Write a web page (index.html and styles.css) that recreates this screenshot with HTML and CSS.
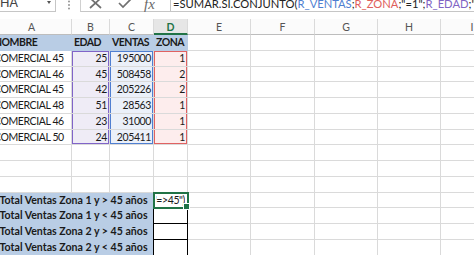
FILE: index.html
```html
<!DOCTYPE html>
<html>
<head lang="es">
    <meta charset="UTF-8">
    <title>SUMAR.SI.CONJUNTO</title>
    <link rel="stylesheet" href="styles.css">
</head>
<body>
<div id="fbar">
    <div class="namebox">
        <span class="nb-text">HA</span>
        <span class="nb-arrow"></span>
    </div>
    <div class="grip">
        <svg width="4" height="10" viewBox="0 0 4 10"><circle cx="2" cy="1.5" r="0.9"/><circle cx="2" cy="5" r="0.9"/><circle cx="2" cy="8.5" r="0.9"/></svg>
    </div>
    <div class="fbtns">
        <svg class="ico-x" width="13" height="11" viewBox="0 0 13 11"><path d="M1 0 L12 10 M12 0 L1 10"/></svg>
        <svg class="ico-ok" width="14" height="10" viewBox="0 0 14 10"><path d="M1 4 L5 8 L13 0"/></svg>
        <span class="fx">fx</span>
    </div>
    <div class="formula">=SUMAR.SI.CONJUNTO(<span class="r-v">R_VENTAS</span>;<span class="r-z">R_ZONA</span>;"=1";<span class="r-e">R_EDAD</span>;"=&gt;45")</div>
</div>

<div id="sheet">
    <!-- cabeceras de columna -->
    <div class="ch">A</div><div class="ch">B</div><div class="ch">C</div><div class="ch sel">D</div><div class="ch">E</div><div class="ch">F</div><div class="ch">G</div><div class="ch">H</div><div class="ch">I</div>

    <!-- fila 1: encabezados de la tabla -->
    <div class="c th">NOMBRE</div><div class="c th">EDAD</div><div class="c th">VENTAS</div><div class="c th">ZONA</div>
    <div class="c"></div><div class="c"></div><div class="c"></div><div class="c"></div><div class="c"></div>

    <!-- datos -->
    <div class="c">COMERCIAL 45</div><div class="c n rb top">25</div><div class="c n rc top">195000</div><div class="c n rd top">1</div>
    <div class="c"></div><div class="c"></div><div class="c"></div><div class="c"></div><div class="c"></div>

    <div class="c">COMERCIAL 46</div><div class="c n rb">45</div><div class="c n rc">508458</div><div class="c n rd">2</div>
    <div class="c"></div><div class="c"></div><div class="c"></div><div class="c"></div><div class="c"></div>

    <div class="c">COMERCIAL 45</div><div class="c n rb">42</div><div class="c n rc">205226</div><div class="c n rd">2</div>
    <div class="c"></div><div class="c"></div><div class="c"></div><div class="c"></div><div class="c"></div>

    <div class="c">COMERCIAL 48</div><div class="c n rb">51</div><div class="c n rc">28563</div><div class="c n rd">1</div>
    <div class="c"></div><div class="c"></div><div class="c"></div><div class="c"></div><div class="c"></div>

    <div class="c">COMERCIAL 46</div><div class="c n rb">23</div><div class="c n rc">31000</div><div class="c n rd">1</div>
    <div class="c"></div><div class="c"></div><div class="c"></div><div class="c"></div><div class="c"></div>

    <div class="c">COMERCIAL 50</div><div class="c n rb bot">24</div><div class="c n rc bot">205411</div><div class="c n rd bot">1</div>
    <div class="c"></div><div class="c"></div><div class="c"></div><div class="c"></div><div class="c"></div>

    <!-- filas vacias -->
    <div class="c"></div><div class="c"></div><div class="c"></div><div class="c"></div><div class="c"></div><div class="c"></div><div class="c"></div><div class="c"></div><div class="c"></div>
    <div class="c"></div><div class="c"></div><div class="c"></div><div class="c"></div><div class="c"></div><div class="c"></div><div class="c"></div><div class="c"></div><div class="c"></div>
    <div class="c"></div><div class="c"></div><div class="c"></div><div class="c"></div><div class="c"></div><div class="c"></div><div class="c"></div><div class="c"></div><div class="c"></div>

    <!-- totales -->
    <div class="c tl">Total Ventas Zona 1 y &gt; 45 años</div><div class="c box active"><span>"=&gt;45")</span></div>
    <div class="c"></div><div class="c"></div><div class="c"></div><div class="c"></div><div class="c"></div>

    <div class="c tl">Total Ventas Zona 1 y &lt; 45 años</div><div class="c box"></div>
    <div class="c"></div><div class="c"></div><div class="c"></div><div class="c"></div><div class="c"></div>

    <div class="c tl">Total Ventas Zona 2 y &gt; 45 años</div><div class="c box"></div>
    <div class="c"></div><div class="c"></div><div class="c"></div><div class="c"></div><div class="c"></div>

    <div class="c tl">Total Ventas Zona 2 y &lt; 45 años</div><div class="c box"></div>
    <div class="c"></div><div class="c"></div><div class="c"></div><div class="c"></div><div class="c"></div>
</div>
</body>
</html>
```

FILE: styles.css
```css
* {
    margin: 0;
    padding: 0;
    box-sizing: border-box;
}

body {
    width: 474px;
    height: 255px;
    overflow: hidden;
    background: #fff;
    color: #1a1a1a;
    font-family: Lato, "Liberation Sans", sans-serif;
    font-size: 10.5px;
    letter-spacing: -0.4px;
}

/* barra de formulas */
#fbar {
    display: flex;
    height: 17px;
    margin-top: -5px;
    line-height: 16px;
    letter-spacing: 0;
}

.namebox {
    width: 56px;
    display: flex;
    justify-content: space-between;
    align-items: center;
    padding-right: 4px;
    font-size: 12.5px;
    border-right: 1px solid #c6c6c6;
    border-bottom: 1px solid #c6c6c6;
    color: #444;
}

.nb-arrow {
    width: 0;
    height: 0;
    border-left: 2.5px solid transparent;
    border-right: 2.5px solid transparent;
    border-top: 3px solid #555;
    margin-top: -1px;
}

.grip {
    width: 24px;
    display: flex;
    align-items: center;
    padding-left: 11px;
    padding-top: 3px;
    fill: #8a8a8a;
}

.fbtns {
    width: 90px;
    display: flex;
    align-items: center;
    padding-left: 8px;
    padding-top: 1px;
    border-left: 1px solid #d0d0d0;
    border-bottom: 1px solid #c6c6c6;
}

.fbtns svg {
    fill: none;
    stroke: #707070;
    stroke-width: 1.7;
}

.ico-ok {
    margin-left: 16px;
}

.fx {
    margin-left: 12px;
    font-family: "Liberation Serif", serif;
    font-style: italic;
    font-size: 15px;
    color: #6a6a6a;
}

.formula {
    flex: 1;
    padding-left: 2px;
    padding-top: 1px;
    white-space: nowrap;
    overflow: hidden;
    font-size: 11.2px;
    border-left: 1px solid #c6c6c6;
    border-bottom: 1px solid #c6c6c6;
    color: #222;
}

.r-v {
    color: #4f7fd1;
}

.r-z {
    color: #e0605c;
}

.r-e {
    color: #8164c4;
}

/* hoja */
#sheet {
    display: grid;
    grid-template-columns: 80px 38px 44px 34px 63px 64px 63px 63px 63px;
    grid-template-rows: 16px;
    grid-auto-rows: 15.75px;
    margin-top: 7px;
    margin-left: -8px;
}

.ch {
    text-align: center;
    line-height: 17px;
    font-size: 10.5px;
    letter-spacing: 0;
    color: #555;
    border-right: 1px solid #dadada;
    border-bottom: 1px solid #bdbdbd;
    background: #fbfbfb;
}

.ch.sel {
    background: #e6e6e6;
    color: #217346;
    font-weight: bold;
    border-bottom: 2px solid #217346;
}

.c {
    padding: 0 2px;
    line-height: 15px;
    white-space: nowrap;
    overflow: hidden;
    border-right: 1px solid #dadada;
    border-bottom: 1px solid #dadada;
}

.n {
    text-align: right;
}

.th {
    font-weight: bold;
    letter-spacing: -0.5px;
    background: #b9cde5;
    border-right-color: #b9cde5;
    border-bottom-color: #b9cde5;
}

/* rangos de la formula */
.rb {
    background: #efecf6;
    box-shadow: inset 1px 0 #8064c8, inset -1px 0 #8064c8;
}

.rc {
    background: #ebf0f9;
    box-shadow: inset 1px 0 #4f7fd1, inset -1px 0 #4f7fd1;
}

.rd {
    background: #fdeded;
    box-shadow: inset 1px 0 #e06262, inset -1px 0 #e06262;
}

.rb.top {
    box-shadow: inset 1px 1px #8064c8, inset -1px 0 #8064c8;
}

.rc.top {
    box-shadow: inset 1px 1px #4f7fd1, inset -1px 0 #4f7fd1;
}

.rd.top {
    box-shadow: inset 1px 1px #e06262, inset -1px 0 #e06262;
}

.rb.bot {
    box-shadow: inset 1px -1px #8064c8, inset -1px 0 #8064c8;
}

.rc.bot {
    box-shadow: inset 1px -1px #4f7fd1, inset -1px 0 #4f7fd1;
}

.rd.bot {
    box-shadow: inset 1px -1px #e06262, inset -1px 0 #e06262;
}

/* totales */
.tl {
    grid-column: span 3;
    padding-left: 7.5px;
    font-size: 10.6px;
    font-weight: bold;
    letter-spacing: 0;
    background: #b9cde5;
    border-right-color: #b9cde5;
    border-bottom-color: #b9cde5;
}

.box {
    border-right-color: #000;
    border-bottom-color: #000;
    box-shadow: -1px -1px 0 #000;
}

.active {
    position: relative;
    overflow: visible;
    outline: 2px solid #217346;
    outline-offset: -1px;
    z-index: 1;
}

.active span {
    display: flex;
    justify-content: flex-end;
    overflow: hidden;
    width: 100%;
}

.active::after {
    content: "";
    position: absolute;
    right: -3px;
    bottom: -3px;
    width: 5px;
    height: 5px;
    background: #217346;
    border: 1px solid #fff;
}
```
